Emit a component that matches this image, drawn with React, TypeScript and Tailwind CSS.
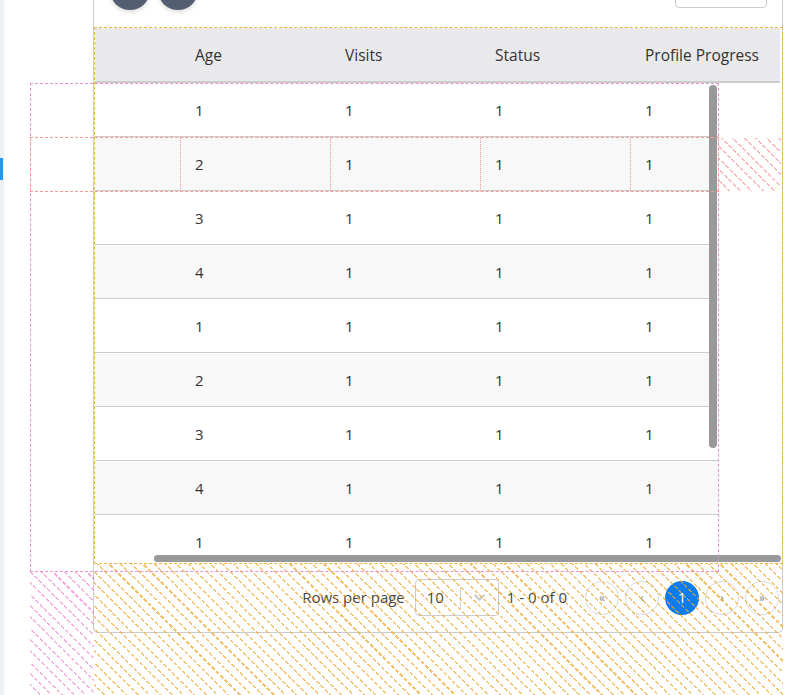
import { ChevronDown } from "lucide-react";

const ages = [1, 2, 3, 4, 1, 2, 3, 4, 1];
const columns = ["Age", "Visits", "Status", "Profile Progress"];

const dashMask =
  "[mask-image:repeating-linear-gradient(135deg,#000_0_4px,transparent_4px_6px)]";
const orangeHatch = `bg-[repeating-linear-gradient(45deg,transparent_0_6.5px,rgba(243,168,45,0.7)_6.5px_8px)] ${dashMask}`;
const pinkHatch = `bg-[repeating-linear-gradient(45deg,transparent_0_6.5px,rgba(236,110,200,0.55)_6.5px_8px)] ${dashMask}`;
const redHatch = `bg-[repeating-linear-gradient(45deg,transparent_0_6.5px,rgba(245,110,110,0.5)_6.5px_8px)] ${dashMask}`;

function PagerButton({ label, active }: { label: string; active?: boolean }) {
  return (
    <div
      className={
        active
          ? "flex h-[34px] w-[34px] items-center justify-center rounded-full bg-[#0a7cf0] text-[15px] text-white"
          : "flex h-[34px] w-[34px] items-center justify-center rounded-full border border-[#d9d9d9] text-[12px] text-[#888]"
      }
    >
      {label}
    </div>
  );
}

export default function App() {
  return (
    <div
      className="relative flex h-[695px] w-[811px] overflow-hidden bg-white text-[#333]"
      style={{ fontFamily: '"Open Sans", "Noto Sans", sans-serif' }}
    >
      <div className="relative h-full w-[4px] bg-[#eef1f4]">
        <div className="absolute left-0 top-[158px] h-[22px] w-[3px] bg-[#1e9bf0]" />
      </div>

      <div className="ml-[89px] flex h-[633px] w-[690px] flex-col rounded-b-[5px] border-x border-b border-[#cccccc]">
        {/* toolbar */}
        <div className="flex h-[28px] items-start justify-between pl-[16px] pr-[15px]">
          <div className="-mt-[30px] flex gap-2">
            <div className="h-10 w-10 rounded-full bg-[#535f70] shadow-[0_2px_4px_rgba(0,0,0,0.15)]" />
            <div className="h-10 w-10 rounded-full bg-[#535f70] shadow-[0_2px_4px_rgba(0,0,0,0.15)]" />
          </div>
          <div className="-mt-[20px] h-[28px] w-[92px] rounded-[4px] border border-[#cccccc]" />
        </div>

        {/* table */}
        <div className="relative h-[535px] overflow-hidden pl-px">
          <div className="grid h-[55px] w-[685px] grid-cols-[85px_150px_150px_150px_150px] items-center border-b-2 border-[#cccccc] bg-[#e9e9eb] pt-[2px] text-[15.5px] text-[#333]">
            <div />
            {columns.map((c) => (
              <div key={c} className="whitespace-nowrap pl-[15px]">
                {c}
              </div>
            ))}
          </div>
          <div className="w-[623px]">
            {ages.map((age, i) => (
              <div
                key={i}
                className={`grid h-[54px] grid-cols-[85px_150px_150px_150px_150px] items-center border-b border-[#cccccc] pt-[2px] text-[15px] ${
                  i % 2 === 1 ? "bg-[#f8f8f8]" : "bg-white"
                }`}
              >
                <div />
                <div className="pl-[15px]">{age}</div>
                <div className="pl-[15px]">1</div>
                <div className="pl-[15px]">1</div>
                <div className="pl-[15px]">1</div>
              </div>
            ))}
          </div>
          {/* scrollbars */}
          <div className="absolute left-[615px] top-[57px] h-[363px] w-[8px] rounded-full bg-[#999999]" />
          <div className="absolute left-[60px] top-[527px] h-[7px] w-[627px] rounded-full bg-[#999999]" />
        </div>

        {/* footer */}
        <div className="flex h-[69px] items-center justify-end gap-[8px] pr-[3px] text-[15px] text-[#444]">
          <span className="mr-[2px]">Rows per page</span>
          <div className="flex h-[37px] w-[84px] items-center rounded-[4px] border border-[#cccccc]">
            <span className="w-[44px] pl-[11px]">10</span>
            <div className="h-[22px] w-px bg-[#d6d6d6]" />
            <ChevronDown className="ml-[10px] h-[17px] w-[17px] text-[#cccccc]" strokeWidth={3} />
          </div>
          <span className="mr-[10px]">1 - 0 of 0</span>
          <div className="flex gap-[6px]">
            <PagerButton label="«" />
            <PagerButton label="‹" />
            <PagerButton label="1" active />
            <PagerButton label="›" />
            <PagerButton label="»" />
          </div>
        </div>
      </div>

      {/* debug overlays */}
      <div className="pointer-events-none absolute left-[94px] top-[27px] h-[537px] w-[689px] border border-dashed border-[#f3b340]" />
      <div className={`pointer-events-none absolute left-[94px] top-[564px] h-[131px] w-[689px] ${orangeHatch}`} />
      <div className="pointer-events-none absolute left-[30px] top-[83px] h-[489px] w-[689px] border border-dashed border-[#ee8fd0]" />
      <div className={`pointer-events-none absolute left-[30px] top-[572px] h-[123px] w-[64px] ${pinkHatch}`} />
      <div className="pointer-events-none absolute left-[30px] top-[137px] flex h-[55px] w-[689px] border border-dashed border-[#f29a9a]">
        <div className="w-[150px] border-r border-dotted border-[#f29a9a]" />
        <div className="w-[150px] border-r border-dotted border-[#f29a9a]" />
        <div className="w-[150px] border-r border-dotted border-[#f29a9a]" />
        <div className="w-[150px] border-r border-dotted border-[#f29a9a]" />
      </div>
      <div className={`pointer-events-none absolute left-[719px] top-[138px] h-[53px] w-[62px] ${redHatch}`} />
    </div>
  );
}
